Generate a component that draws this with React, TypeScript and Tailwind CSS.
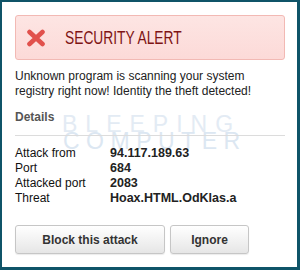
export default function App() {
  const rows: [string, string][] = [
    ["Attack from", "94.117.189.63"],
    ["Port", "684"],
    ["Attacked port", "2083"],
    ["Threat", "Hoax.HTML.OdKlas.a"],
  ];
  return (
    <div
      className="relative w-[300px] h-[270px] bg-white border-t-2 border-l-2 border-r-[3px] border-b-[3px] border-[#0f5468] pl-[13px] pr-[12px] pt-[13px] overflow-hidden"
      style={{ fontFamily: '"Liberation Sans", Arial, sans-serif' }}
    >
      {/* watermark */}
      <div className="absolute left-[60px] top-[114px] pointer-events-none select-none leading-[17px] text-[23px] text-[#e3ebf4] whitespace-nowrap">
        <div className="tracking-[8px]">BLEEPING</div>
        <div className="tracking-[6.5px] ml-[1px] text-[#dce7f2]">COMPUTER</div>
      </div>

      <div className="relative">
        <div className="h-[45px] flex items-center pl-[10px] border border-[#f2b9b4] rounded-[3px] bg-gradient-to-b from-[#fde5e3] to-[#fcdad8]">
          <svg width="20" height="18" viewBox="0 0 20 18" className="shrink-0">
            <path d="M3.5 3 L16.5 15 M16.5 3 L3.5 15" stroke="#e1514c" strokeWidth="4.6" strokeLinecap="round" />
          </svg>
          <span className="ml-[19px] inline-block text-[19px] leading-none text-[#7e1414] scale-x-[0.725] origin-left whitespace-nowrap">
            SECURITY ALERT
          </span>
        </div>

        <p className="mt-[9px] text-[12px] leading-[15px] text-[#222]">
          Unknown program is scanning your system registry right now! Identity the theft detected!
        </p>

        <div className="mt-[11px] text-[12px] leading-[15px] font-bold text-[#555]">Details</div>
        <div className="mt-[10px] h-px bg-[#dcdcdc]" />

        <div className="mt-[10px] text-[12px] leading-[15px] text-[#111]">
          {rows.map(([k, v]) => (
            <div key={k} className="flex">
              <span className="w-[95px] shrink-0">{k}</span>
              <span className="font-bold text-[#222] text-[12.5px]">{v}</span>
            </div>
          ))}
        </div>

        <div className="mt-[19px] flex gap-[5px]">
          <button className="w-[150px] h-[29px] rounded-[3px] border border-[#c6c6c6] bg-gradient-to-b from-white to-[#e6e6e6] text-[12px] font-bold text-[#333] shadow-[0_1px_1px_rgba(0,0,0,0.08)]">
            Block this attack
          </button>
          <button className="w-[79px] h-[29px] rounded-[3px] border border-[#c6c6c6] bg-gradient-to-b from-white to-[#e6e6e6] text-[12px] font-bold text-[#333] shadow-[0_1px_1px_rgba(0,0,0,0.08)]">
            Ignore
          </button>
        </div>
      </div>
    </div>
  );
}
